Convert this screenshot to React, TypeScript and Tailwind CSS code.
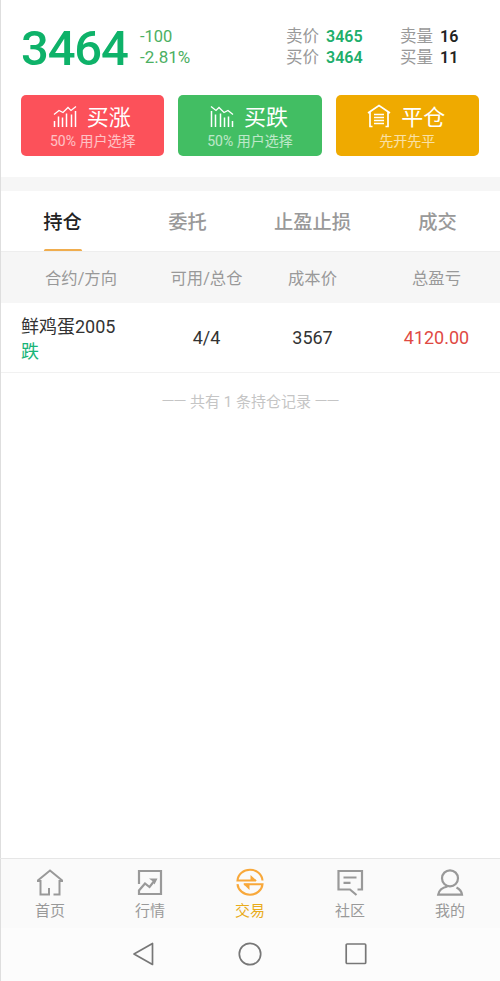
import { ReactNode } from "react";

const iconProps = {
  fill: "none",
  stroke: "currentColor",
  className: "block shrink-0",
};

const RiseIcon = () => (
  <svg {...iconProps} width="24" height="24" viewBox="0 0 24 24">
    <path d="M1 10.500L6 6.500l4 2 5-5 3 3 5-4" strokeWidth="1.3" />
    <path
      d="M1.500 17v6M5.500 12.500V23M9.500 13.500V23M13.500 9.500V23M18.500 10.500V23M22.500 7v16"
      strokeWidth="1.5"
    />
  </svg>
);

const FallIcon = () => (
  <svg {...iconProps} width="24" height="24" viewBox="0 0 24 24">
    <path d="M1 2.500l5 4 3-3 5 5 4-2 5 4" strokeWidth="1.3" />
    <path
      d="M1.500 7v16M5.500 10.500V23M10.500 9.500V23M14.500 13.500V23M18.500 12.500V23M22.500 17v6"
      strokeWidth="1.5"
    />
  </svg>
);

const CloseIcon = () => (
  <svg {...iconProps} width="24" height="24" viewBox="0 0 24 24">
    <path d="M1 9L12 1.500 23 9M3 8v14.500h2.500M21 8v14.500h-2.500" strokeWidth="1.7" />
    <path d="M7 10.500h10M7 13.500h10M7 16.500h10M7 19.500h10" strokeWidth="1.5" />
  </svg>
);

const HomeIcon = () => (
  <svg {...iconProps} width="28" height="28" viewBox="0 0 28 28">
    <path
      d="M1 13h3.500v13.500H13V20M27 13h-3.500v13.500h-6M1.500 12.800L14 2.500l12.500 10.300"
      strokeWidth="2"
    />
  </svg>
);

const MarketIcon = () => (
  <svg {...iconProps} width="28" height="28" viewBox="0 0 28 28">
    <path d="M3 16V3h22v23H3v-3.500l6-7 4.500 3.500 5.500-7" strokeWidth="2.2" />
    <path d="M13 10.500h8.500l-3 6-1.500-3z" fill="currentColor" stroke="none" />
  </svg>
);

const TradeIcon = () => (
  <svg {...iconProps} width="28" height="28" viewBox="0 0 28 28">
    <path
      d="M20 12.500H1.500C2 6 7.500 1.800 14 1.800S26 6 26.500 12.500M8 16.200h18.500C26 22 20.500 26.700 14 26.700S2 22 1.500 16.200"
      strokeWidth="2.1"
    />
    <path
      d="M14.500 7l6.500 6h-6.500zM13.500 22L7 15.700h6.500z"
      fill="currentColor"
      stroke="none"
    />
  </svg>
);

const CommunityIcon = () => (
  <svg {...iconProps} width="28" height="28" viewBox="0 0 28 28">
    <path
      d="M21.500 21.500H26V3H2.500v18.500H14l6.500 5.500M7.500 9.500h13M7.500 14.800h7"
      strokeWidth="2.2"
    />
  </svg>
);

const MineIcon = () => (
  <svg {...iconProps} width="28" height="28" viewBox="0 0 28 28">
    <circle cx="14" cy="10.300" r="8" strokeWidth="2.2" />
    <path
      d="M11.500 18.500C6 19.500 3 22 2.200 26.600h23.800c-.5-3.500-2.500-5.500-5.500-7"
      strokeWidth="2.2"
    />
  </svg>
);

interface ActionButtonProps {
  icon: ReactNode;
  title: string;
  subtitle: string;
  color: string;
}

const ActionButton = ({ icon, title, subtitle, color }: ActionButtonProps) => (
  <button
    className={`flex h-[61px] flex-1 flex-col items-center rounded-[5px] text-white ${color}`}
  >
    <span className="mt-[9px] flex h-[26px] items-start gap-[10px] pr-[2px] text-[22px] leading-[28px]">
      {icon}
      {title}
    </span>
    <span className="mt-px text-sm leading-5 text-white/65">{subtitle}</span>
  </button>
);

interface QuoteProps {
  label: string;
  value: string;
  color: string;
}

const Quote = ({ label, value, color }: QuoteProps) => (
  <div className="flex gap-[7px] text-[16.5px] leading-[21px] text-[#999]">
    {label}
    <b className={`text-[16px] font-semibold ${color}`}>{value}</b>
  </div>
);

const tabs = ["持仓", "委托", "止盈止损", "成交"];

const navItems = [
  { label: "首页", icon: <HomeIcon /> },
  { label: "行情", icon: <MarketIcon /> },
  { label: "交易", icon: <TradeIcon />, active: true },
  { label: "社区", icon: <CommunityIcon /> },
  { label: "我的", icon: <MineIcon /> },
];

const App = () => {
  return (
    <div className="flex h-[981px] w-[500px] flex-col border-l border-[#dedede] bg-white font-[Roboto,'Noto_Sans_CJK_SC',sans-serif] text-[#333]">
      <header className="flex h-[95px] shrink-0 pl-5">
        <div className="mt-[19px] w-[119px] text-[49px] font-medium leading-[60px] tracking-[-1.2px] text-[#0eb269]">
          3464
        </div>
        <div className="mt-[26px] w-[146px] text-[16.5px] leading-[21px] text-[#4caf62]">
          <div>-100</div>
          <div className="text-[17px]">-2.81%</div>
        </div>
        <div className="mt-[26px] w-[114px]">
          <Quote label="卖价" value="3465" color="text-[#20ae6b]" />
          <Quote label="买价" value="3464" color="text-[#20ae6b]" />
        </div>
        <div className="mt-[26px]">
          <Quote label="卖量" value="16" color="text-[#222]" />
          <Quote label="买量" value="11" color="text-[#222]" />
        </div>
      </header>

      <div className="flex h-[82px] shrink-0 gap-[14px] pl-5 pr-[21px]">
        <ActionButton
          icon={<RiseIcon />}
          title="买涨"
          subtitle="50% 用户选择"
          color="bg-[#fc515a]"
        />
        <ActionButton
          icon={<FallIcon />}
          title="买跌"
          subtitle="50% 用户选择"
          color="bg-[#42be63]"
        />
        <ActionButton
          icon={<CloseIcon />}
          title="平仓"
          subtitle="先开先平"
          color="bg-[#efaa00]"
        />
      </div>

      <div className="h-[14px] shrink-0 bg-[#f6f6f6]" />

      <nav className="-ml-px flex h-[60px] shrink-0 text-[19.3px] font-medium text-[#999]">
        {tabs.map((tab, i) => (
          <button key={tab} className="flex flex-1 flex-col items-center">
            <span
              className={`mt-[17px] leading-[30px] ${i === 0 ? "text-[#222]" : ""}`}
            >
              {tab}
            </span>
            {i === 0 && (
              <span className="mt-[11px] h-[3px] w-[38px] shrink-0 rounded-full bg-[#f0ad4e]" />
            )}
          </button>
        ))}
      </nav>

      <div className="flex h-[52px] shrink-0 items-center border-t border-[#eee] bg-[#f6f6f6] pt-[3px] text-center text-[16.3px] text-[#999]">
        <div className="w-[160px]">合约/方向</div>
        <div className="w-[91px]">可用/总仓</div>
        <div className="w-[121px]">成本价</div>
        <div className="flex-1">总盈亏</div>
      </div>
      <div className="flex h-[70px] shrink-0 items-center border-b border-[#f1f1f1] text-center text-[18px]">
        <div className="w-[160px] pl-5 pt-[2px] text-left leading-[25px]">
          <div>鲜鸡蛋2005</div>
          <div className="text-[#18b477]">跌</div>
        </div>
        <div className="w-[91px]">4/4</div>
        <div className="w-[121px]">3567</div>
        <div className="flex-1 text-[#df4a43]">4120.00</div>
      </div>
      <div className="flex justify-center gap-1 pt-[18px] text-[15px] leading-[22px] text-[#c5c5c5]">
        <span className="text-[12px]">一一</span>
        共有 1 条持仓记录
        <span className="text-[12px]">一一</span>
      </div>

      <footer className="mt-auto shrink-0 bg-[#fafafa]">
        <div className="-ml-px flex h-[70px] border-t border-[#e6e6e6]">
          {navItems.map((item) => (
            <div
              key={item.label}
              className={`flex flex-1 flex-col items-center pt-[9px] ${
                item.active ? "text-[#f8a83a]" : "text-[#999]"
              }`}
            >
              {item.icon}
              <span
                className={`mt-[4px] text-[15px] leading-[22px] ${
                  item.active ? "text-[#e9ac1c]" : ""
                }`}
              >
                {item.label}
              </span>
            </div>
          ))}
        </div>
        <div className="flex h-[53px] items-center justify-center gap-[82px] bg-[#fcfcfc] pb-px pr-[2px] text-[#777]">
          <svg {...iconProps} width="24" height="24" viewBox="0 0 24 24">
            <path d="M20.500 1.500v21L2 12z" strokeWidth="1.7" strokeLinejoin="round" />
          </svg>
          <svg {...iconProps} width="24" height="24" viewBox="0 0 24 24">
            <circle cx="12" cy="12" r="10.700" strokeWidth="1.7" />
          </svg>
          <svg {...iconProps} width="24" height="24" viewBox="0 0 24 24">
            <rect x="2.200" y="2" width="19.500" height="19.500" rx="1" strokeWidth="1.7" />
          </svg>
        </div>
      </footer>
    </div>
  );
};

export default App;
